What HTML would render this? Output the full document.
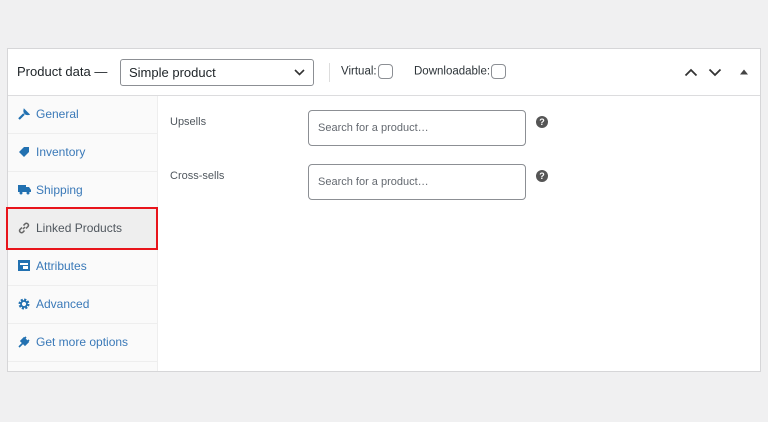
<!DOCTYPE html>
<html><head><style>
*{box-sizing:border-box;margin:0;padding:0}
body{width:768px;height:422px;background:#f0f0f1;font-family:"Liberation Sans",sans-serif;position:relative;overflow:hidden;color:#1d2327}
.panel{position:absolute;left:7px;top:48px;width:754px;height:324px;background:#fff;border:1px solid #d6d6d8}
.hdr{position:absolute;left:0;top:0;width:100%;height:47px;border-bottom:1px solid #dcdcde}
.abs{position:absolute;white-space:nowrap}
.side{position:absolute;left:0;top:47px;width:150px;bottom:0;background:#fafafa;border-right:1px solid #eee}
.tab{position:absolute;left:0;width:149px;height:38px;border-bottom:1px solid #eee;color:#3a79b8;font-size:12px;padding-left:28px;line-height:36px}
.tab svg{position:absolute;left:10px;top:12px}
.inp{position:absolute;left:300px;width:218px;height:36px;border:1px solid #8c8f94;border-radius:4px;font-size:11px;color:#646970;padding-left:9px;line-height:34px}
.help{position:absolute;width:12px;height:12px;border-radius:50%;background:#555;color:#fff;font-size:9px;font-weight:bold;text-align:center;line-height:12px}
.cb{display:inline-block;width:15px;height:15px;border:1px solid #8c8f94;border-radius:4px;vertical-align:middle;margin-left:1px}
</style></head><body>
<div class="panel">
 <div class="hdr">
  <div class="abs" style="left:9px;top:15px;font-size:13px">Product data —</div>
  <div class="abs" style="left:112px;top:10px;width:194px;height:27px;border:1px solid #8c8f94;border-radius:3px;font-size:13px;padding-left:8px;line-height:25px">Simple product
   <svg style="position:absolute;right:8px;top:9px" width="11" height="7" viewBox="0 0 11 7"><path d="M1 1l4.5 4.5L10 1" fill="none" stroke="#333" stroke-width="1.6"/></svg></div>
  <div class="abs" style="left:321px;top:14px;width:1px;height:19px;background:#ddd"></div>
  <div class="abs" style="left:333px;top:15px;font-size:11.5px;line-height:15px;color:#2c3338">Virtual:<span class="cb"></span></div>
  <div class="abs" style="left:406px;top:15px;font-size:11.5px;line-height:15px;color:#2c3338">Downloadable:<span class="cb"></span></div>
  <svg class="abs" style="left:676px;top:19px" width="14" height="9" viewBox="0 0 14 9"><path d="M1.5 7.5L7 2l5.5 5.5" fill="none" stroke="#333" stroke-width="1.8"/></svg>
  <svg class="abs" style="left:700px;top:19px" width="14" height="9" viewBox="0 0 14 9"><path d="M1.5 1.5L7 7l5.5-5.5" fill="none" stroke="#333" stroke-width="1.8"/></svg>
  <svg class="abs" style="left:732px;top:20px" width="8" height="6" viewBox="0 0 8 6"><path d="M0 5.5L4 0.5L8 5.5z" fill="#444"/></svg>
 </div>
 <div class="side">
  <div class="tab" style="top:0"><svg width="12" height="12" viewBox="0 0 12 12"><path d="M1 11l5-5M6.5 2.5a3 3 0 0 0 3.5 3.5L8 4z" stroke="#2271b1" stroke-width="2.2" fill="#2271b1"/></svg>General</div>
  <div class="tab" style="top:38px"><svg width="12" height="12" viewBox="0 0 12 12"><path d="M1 6l5-5h5v5l-5 5z" fill="#2271b1"/></svg>Inventory</div>
  <div class="tab" style="top:76px"><svg width="13" height="11" viewBox="0 0 13 11"><path d="M0 1h8v7H0zM8 3h3l2 3v2H8z" fill="#2271b1"/><circle cx="3" cy="9" r="1.5" fill="#2271b1"/><circle cx="10" cy="9" r="1.5" fill="#2271b1"/></svg>Shipping</div>
  <div class="tab" style="top:114px;background:#eee;color:#50575e"><svg width="12" height="12" viewBox="0 0 12 12"><path d="M5 7L7 5M4 5.5L2 7.5a2 2 0 0 0 2.8 2.8L6.5 8.5M8 6.5l2-2A2 2 0 0 0 7.2 1.7L5.5 3.5" fill="none" stroke="#666" stroke-width="1.5"/></svg>Linked Products</div>
  <div class="tab" style="top:152px"><svg width="12" height="11" viewBox="0 0 12 11"><path d="M0 0h12v11H0z" fill="#2271b1"/><path d="M2 3h8v2H2zM5 6h5v3H5z" fill="#fff"/></svg>Attributes</div>
  <div class="tab" style="top:190px"><svg width="12" height="12" viewBox="0 0 12 12"><circle cx="6" cy="6" r="4.2" fill="none" stroke="#2271b1" stroke-width="2.6" stroke-dasharray="2 1.3"/><circle cx="6" cy="6" r="3" fill="none" stroke="#2271b1" stroke-width="1.8"/></svg>Advanced</div>
  <div class="tab" style="top:228px"><svg width="12" height="12" viewBox="0 0 12 12"><path d="M1 11l4-4M3 5l4 4 3-3-4-4z M8 1l-2 2M11 4l-2 2" stroke="#2271b1" stroke-width="1.6" fill="#2271b1"/></svg>Get more options</div>
 </div>
 <div class="abs" style="left:162px;top:67px;font-size:11px;color:#50575e">Upsells</div>
 <div class="abs" style="left:162px;top:121px;font-size:11px;color:#50575e">Cross-sells</div>
 <div class="inp" style="top:61px">Search for a product…</div>
 <div class="inp" style="top:115px">Search for a product…</div>
 <div class="help" style="left:528px;top:67px">?</div>
 <div class="help" style="left:528px;top:121px">?</div>
</div>
<div class="abs" style="left:6px;top:207px;width:152px;height:43px;border:2.5px solid #e8141b"></div>
</body></html>
